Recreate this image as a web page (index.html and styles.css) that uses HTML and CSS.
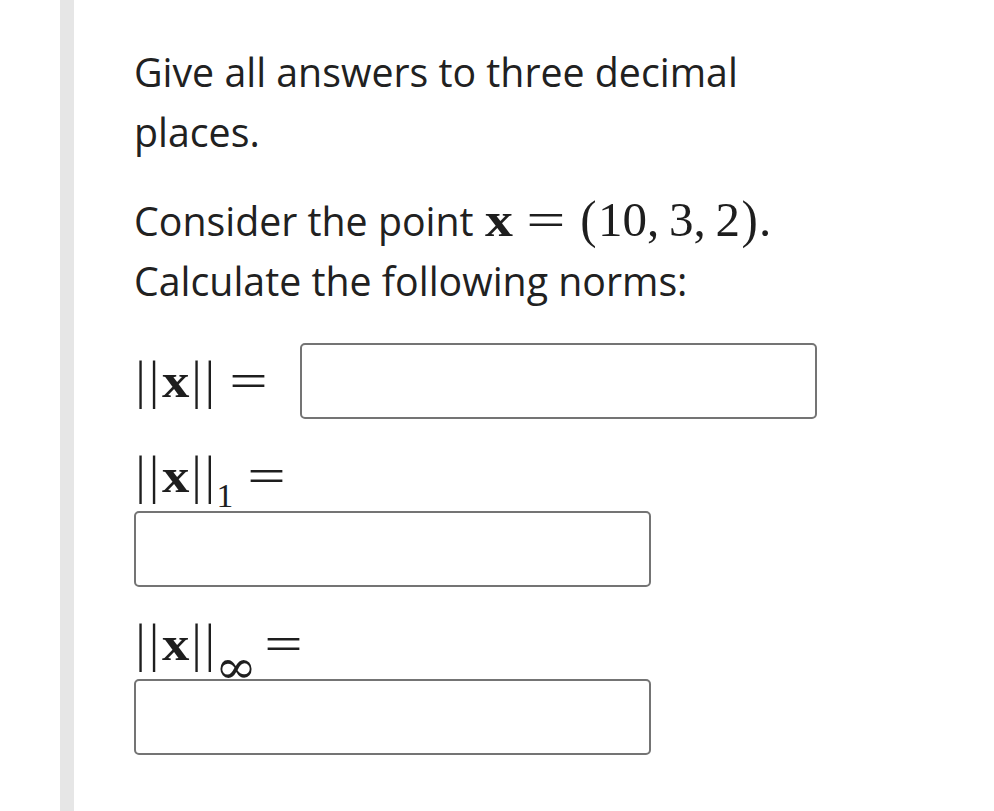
FILE: index.html
```html
<!DOCTYPE html>
<html lang="en">
<head>
<meta charset="utf-8">
<title>Vector norms</title>
<link rel="stylesheet" href="styles.css">
</head>
<body>
<div class="page">
  <div class="rail"></div>
  <main class="content">
    <p class="para">Give all answers to three decimal places.</p>
    <p class="para">Consider the point <span class="math"><span class="mbf">x</span><span class="rel"><span class="eq">=</span></span><span class="mo">(</span>10,<span class="thin"></span>3,<span class="thin"></span>2<span class="mo">)</span>.</span> Calculate the following norms:</p>

    <div class="norm norm-inline">
      <span class="label"><span class="bar">|</span><span class="bar">|</span><span class="mbf">x</span><span class="bar">|</span><span class="bar">|</span><span class="rel"><span class="eq">=</span></span></span>
      <input class="answer" type="text" aria-label="norm of x">
    </div>

    <div class="norm norm-stack">
      <div class="label"><span class="bar">|</span><span class="bar">|</span><span class="mbf">x</span><span class="bar">|</span><span class="bar">|</span><span class="sub">1</span><span class="rel"><span class="eq">=</span></span></div>
      <input class="answer" type="text" aria-label="1-norm of x">
    </div>

    <div class="norm norm-stack">
      <div class="label"><span class="bar">|</span><span class="bar">|</span><span class="mbf">x</span><span class="bar">|</span><span class="bar">|</span><span class="sub inf">∞</span><span class="rel"><span class="eq">=</span></span></div>
      <input class="answer" type="text" aria-label="infinity-norm of x">
    </div>
  </main>
</div>
</body>
</html>
```

FILE: styles.css
```css
* {
  box-sizing: border-box;
}

html,
body {
  margin: 0;
  padding: 0;
  background: #ffffff;
}

body {
  font-family: "Open Sans", "Liberation Sans", sans-serif;
  color: #212121;
}

.page {
  display: flex;
  min-height: 811px;
  padding-left: 60px;
}

.rail {
  flex: none;
  width: 14px;
  background: #e6e6e6;
}

.content {
  padding: 42px 0 0 60px;
  width: 780px;
}

.para {
  margin: 0 0 29px;
  width: 720px;
  font-size: 39.3px;
  line-height: 60px;
}

.math,
.label {
  font-family: "Liberation Serif", "DejaVu Serif", serif;
  font-size: 48px;
  white-space: nowrap;
  color: #1e1e1e;
}

.math {
  line-height: 1;
  font-size: 49px;
}

.label {
  line-height: 60px;
}

.mbf {
  display: inline-block;
  width: 0.607em;
  text-align: center;
  font-weight: 700;
  transform: scaleX(1.14);
}

.bar {
  display: inline-block;
  width: 0.278em;
  text-align: center;
  transform: scaleY(1.08);
}

.rel {
  display: inline-block;
  width: 0.778em;
  margin: 0 0.2778em;
  text-align: center;
}

.eq {
  display: inline-block;
  transform: scaleX(1.42);
}

.mo {
  display: inline-block;
  width: 0.389em;
  text-align: center;
  transform: scaleY(1.08);
}

.thin {
  display: inline-block;
  width: 0.2em;
}

.sub {
  display: inline-block;
  font-size: 0.7em;
  line-height: 0;
  vertical-align: -15px;
  margin-right: 0.05em;
}

.sub.inf {
  font-family: "DejaVu Serif", serif;
  width: 1em;
  text-align: left;
  vertical-align: -19px;
  transform-origin: left center;
  transform: translateX(-2px) scale(1.5, 1.4);
}

.norm-inline {
  display: flex;
  align-items: center;
  margin-top: 32px;
}

.norm-inline .answer {
  margin-left: 19px;
}

.norm-stack {
  margin-top: 27px;
}

.norm-stack .label {
  display: block;
}

.norm-stack .answer {
  display: block;
  margin-top: 5px;
}

.answer {
  width: 517px;
  height: 76px;
  padding: 0 12px;
  border: 2px solid #747474;
  border-radius: 5px;
  background: #ffffff;
  font: inherit;
  font-size: 24px;
  outline: none;
}
```
